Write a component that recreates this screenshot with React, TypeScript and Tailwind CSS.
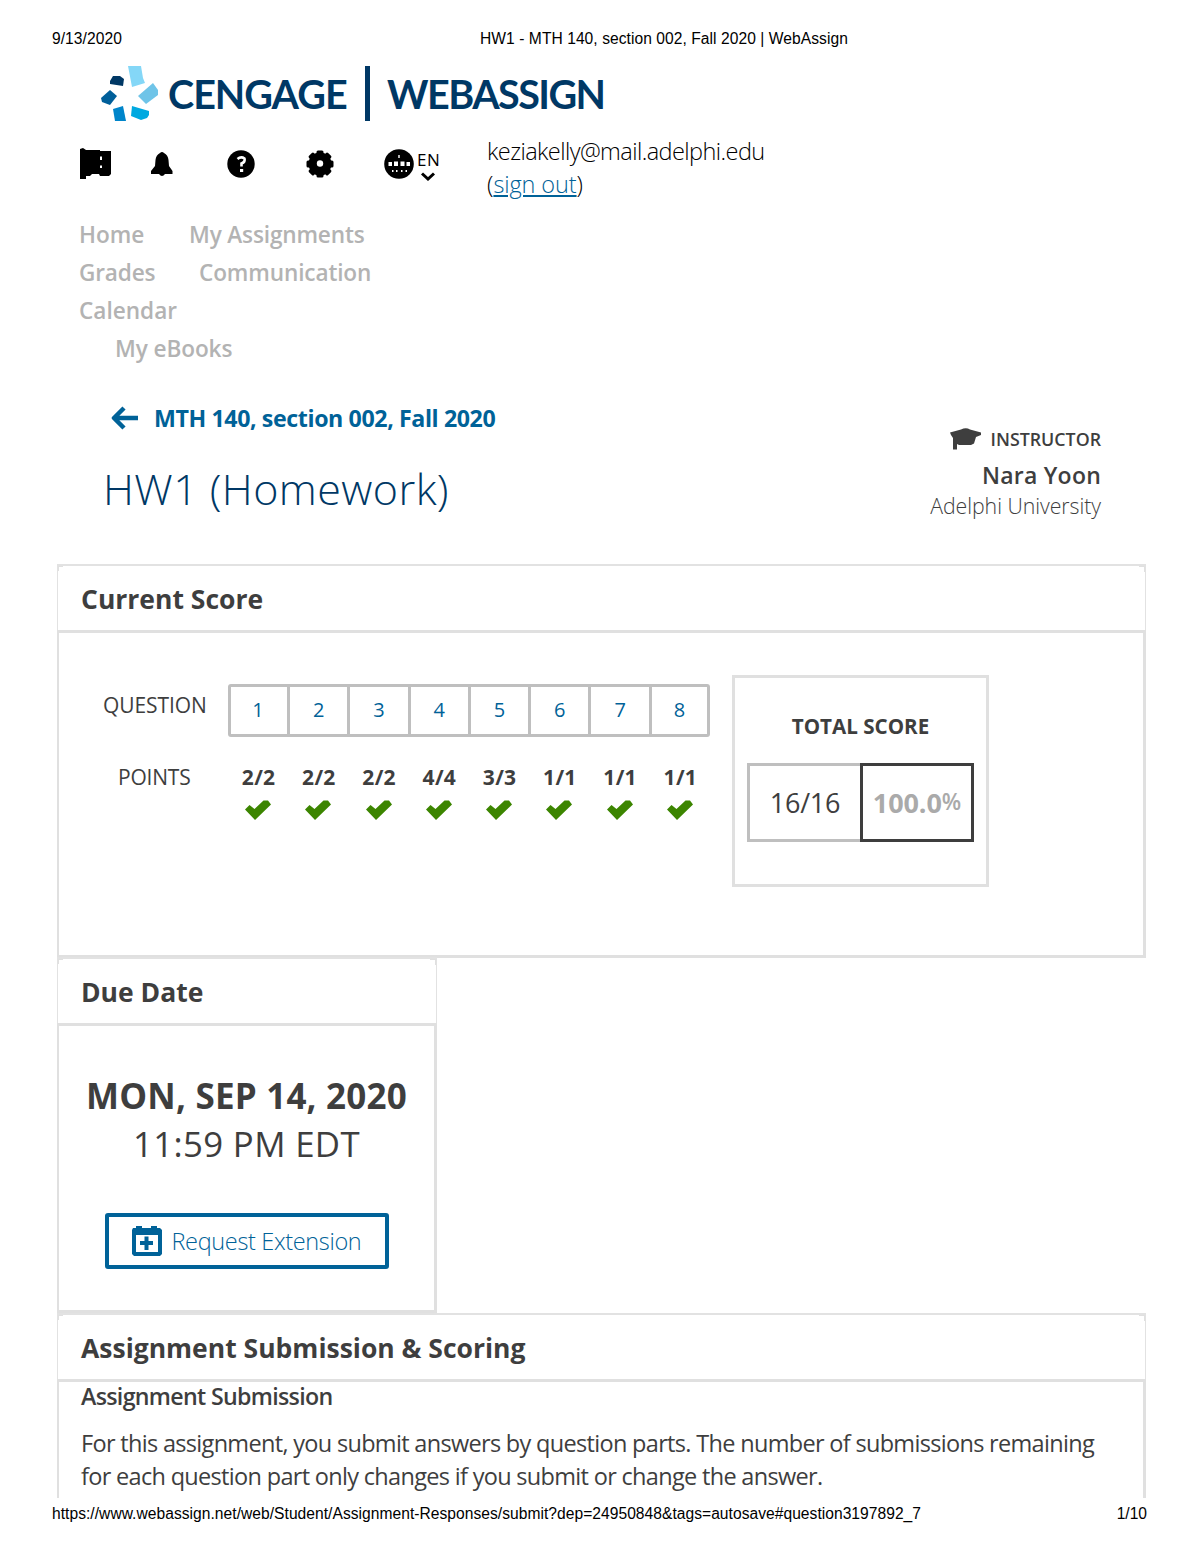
function T({ c = "", children }: { c?: string; children: string }) {
  return <span className={"whitespace-pre inline-block " + c}>{children}</span>;
}

function LogoMark() {
  return (
    <svg viewBox="0 0 58 56" className="w-[58px] h-[56px]">
      <path d="M27 0H40L42 12L44 17L31 21Z" fill="#84d7f7" />
      <path d="M37 30L52 17L57 24V29L45 38Z" fill="#6fc4e8" />
      <path d="M31 40L48 45V49L46 52L40 54L30 50Z" fill="#00a9e0" />
      <path d="M12 43L22 40L25 55H14Z" fill="#0085ca" />
      <path d="M0 32L9 24L16 30L9 39L1 36Z" fill="#005f9a" />
      <path d="M9 15L12 10H19L23 13L22 20L9 18Z" fill="#003865" />
    </svg>
  );
}

function FlagIcon() {
  return (
    <svg viewBox="0 0 32 32" className="w-8 h-8">
      <path d="M0 1L3 0L6 2H20V3H31V26L29 28L20 28L19 26H12L10 28H6V31H0Z" />
      <path d="M20 8.500h2v3.500h-2zM20 17.500h2v2.500h-2z" fill="#fff" />
    </svg>
  );
}

function BellIcon() {
  return (
    <svg viewBox="0 0 22 24" className="w-[22px] h-6">
      <path d="M9 1Q11-1 13 1Q17 3 17.500 8L18 14L21.500 19V22H14Q11 26 8 22H0V19L4 14L4.500 8Q5 3 9 1Z" />
    </svg>
  );
}

function HelpIcon() {
  return (
    <svg viewBox="0 0 28 28" className="w-7 h-7">
      <circle cx="14" cy="14" r="13.700" />
      <path d="M10.500 9Q14 6 17.500 8.500Q18.500 12 14.500 13.500V16.500" fill="none" stroke="#fff" strokeWidth="2.600" />
      <rect x="13" y="19" width="3.200" height="3" fill="#fff" />
    </svg>
  );
}

function GearIcon() {
  return (
    <svg viewBox="0 0 28 28" className="w-7 h-7">
      <circle cx="14" cy="14" r="11.500" />
      <rect x="10.500" y="0.500" width="7" height="27" rx="1.500" />
      <rect x="10.500" y="0.500" width="7" height="27" rx="1.500" transform="rotate(45 14 14)" />
      <rect x="10.500" y="0.500" width="7" height="27" rx="1.500" transform="rotate(90 14 14)" />
      <rect x="10.500" y="0.500" width="7" height="27" rx="1.500" transform="rotate(135 14 14)" />
      <circle cx="14" cy="13.500" r="3.200" fill="#fff" />
    </svg>
  );
}

function GlobeIcon() {
  return (
    <svg viewBox="0 0 30 30" className="w-[30px] h-[30px]">
      <circle cx="15" cy="15" r="14.800" />
      <g fill="#fff">
        <path d="M4.500 13h3.500v4h-3.500zM10 12.500h4v4.500h-4zM16.500 12.500h4v4.500h-4zM22.500 13h3.500v4h-3.500z" />
        <path d="M14.300 6h1.400v3h-1.400zM8 21h1.500v2h-1.500zM12 21h1.500v2h-1.500zM17 21h1.500v2h-1.500zM21.500 21h1.500v2h-1.500z" />
      </g>
    </svg>
  );
}

function Check() {
  return (
    <svg viewBox="0 0 26 20" className="w-[26px] h-5 block">
      <path d="M0 9.500L4.500 5L9.500 9L18.500 0.500H23L26 4.500L10 20Z" fill="#3c8500" />
    </svg>
  );
}

function CapIcon() {
  return (
    <svg viewBox="0 0 32 22" className="w-8 h-[22px]">
      <path
        d="M0 4.500L11 1.500Q16-1 20 1.500L31 4.500V7L26 9L24 15.500L21 17H9L7 16V21.500H3V10L1 7Z"
        fill="#3e3e3e"
      />
    </svg>
  );
}

function CardTitle({ children }: { children: string }) {
  return (
    <div className="relative h-[66px] border-t-2 border-x border-[#e2e2e2] pl-[23px] text-[26.500px] leading-[66px] font-bold">
      <span className="absolute left-0 top-0 w-[5px] h-[5px] border-t border-l border-[#e0e0e0]" />
      <span className="absolute right-0 top-0 w-[6px] h-[6px] border-t border-r border-[#e0e0e0]" />
      <T>{children}</T>
    </div>
  );
}

const scores = ["2/2", "2/2", "2/2", "4/4", "3/3", "1/1", "1/1", "1/1"];

export default function App() {
  return (
    <div className="w-[1200px] h-[1553px] overflow-hidden bg-white font-['Open_Sans',sans-serif] text-[#3e3e3e] flex flex-col">
      <div className="h-[56px] pt-[29px] pl-[52px] flex shrink-0 text-black text-[15.600px] leading-5 font-['Liberation_Sans',sans-serif] tracking-[0.055px]">
        <div className="w-[428px]"><T>9/13/2020</T></div>
        <T>HW1 - MTH 140, section 002, Fall 2020 | WebAssign</T>
      </div>

      <div className="flex h-[76px] pt-[10px] pl-[101px] shrink-0 text-[#003865] text-[39.500px] leading-[56px] font-['Lato',sans-serif] font-bold">
        <LogoMark />
        <div className="pl-[9px] w-[206px] tracking-[-1px]"><T>CENGAGE</T></div>
        <div className="w-[5px] h-[55px] bg-[#003865] mr-[17px]" />
        <T c="tracking-[-1.550px]">WEBASSIGN</T>
      </div>

      <div className="flex h-[84px] shrink-0 text-black">
        <div className="flex items-start pt-[16px] pl-[80px] w-[487px]">
          <div className="w-[71px]"><FlagIcon /></div>
          <div className="w-[76px] pt-1"><BellIcon /></div>
          <div className="w-[79px] pt-[2px]"><HelpIcon /></div>
          <div className="w-[78px] pt-[2px]"><GearIcon /></div>
          <div className="pt-[1px]"><GlobeIcon /></div>
          <div className="pl-[3px] text-[17px] leading-[22px] pt-[1px]">
            <T c="tracking-[0.500px]">EN</T>
            <svg viewBox="0 0 16 9" className="w-4 h-[9px] block ml-[3px] mt-px">
              <path d="M2 1.500L8 7L14 1.500" fill="none" stroke="#000" strokeWidth="3" />
            </svg>
          </div>
        </div>
        <div className="text-[23.500px] leading-[32.500px] pt-[3px] flex flex-col items-start">
          <T c="font-light tracking-[-0.570px]">keziakelly@mail.adelphi.edu</T>
          <span className="flex font-light">
            <T>(</T>
            <T c="text-[#006298] underline decoration-2 underline-offset-2 tracking-[-0.100px]">sign out</T>
            <T>)</T>
          </span>
        </div>
      </div>

      <nav className="pl-[79px] h-[176px] shrink-0 text-[22.600px] leading-[37.900px] font-semibold text-[#b3b3b3]">
        <div className="flex"><div className="w-[110px]"><T>Home</T></div><T c="tracking-[-0.160px]">My Assignments</T></div>
        <div className="flex"><div className="w-[120px]"><T c="tracking-[-0.150px]">Grades</T></div><T c="tracking-[-0.130px]">Communication</T></div>
        <div><T>Calendar</T></div>
        <div className="pl-[36px]"><T c="tracking-[-0.100px]">My eBooks</T></div>
      </nav>

      <div className="flex h-[172px] shrink-0 justify-between pl-[103px] pr-[99px]">
        <div className="pt-[6px]">
          <div className="flex items-center h-[40px] pl-[8px] text-[23.200px] leading-[40px] font-bold text-[#006298]">
            <svg viewBox="0 0 28 26" className="w-7 h-[26px] mr-[15px] -mt-px">
              <path d="M13 3L3 13L13 23M3 13H27" fill="none" stroke="#006298" strokeWidth="4.500" strokeLinejoin="round" />
            </svg>
            <T c="tracking-[-0.400px]">MTH 140, section 002, Fall 2020</T>
          </div>
          <div className="pt-[19px] text-[43px] leading-[64px] font-light text-[#003865]"><T c="tracking-[0.430px]">HW1 (Homework)</T></div>
        </div>
        <div className="flex flex-col items-end pt-[34px]">
          <div className="flex items-center text-[17.800px] leading-[26px] font-semibold">
            <span className="pr-[9px]"><CapIcon /></span>
            <T>INSTRUCTOR</T>
          </div>
          <div className="text-[23px] leading-[30px] pt-[8px] font-semibold"><T c="tracking-[0.230px]">Nara Yoon</T></div>
          <div className="text-[21.300px] leading-[30px] pt-px font-light"><T c="tracking-[-0.050px]">Adelphi University</T></div>
        </div>
      </div>

      <section className="ml-[57px] w-[1089px] h-[393px] shrink-0">
        <CardTitle>Current Score</CardTitle>
        <div className="h-[328px] border-y-[3px] border-l-2 border-r-[3px] border-[#e0e0e0] flex pl-[44px] pt-[42px]">
          <div className="w-[125px] text-[21px] leading-[44px] pt-[8px]">
            <T c="tracking-[-0.100px]">QUESTION</T>
            <div className="pl-[15px] pt-[28px]"><T c="tracking-[-0.200px]">POINTS</T></div>
          </div>
          <div className="w-[482px]">
            <div className="grid grid-cols-[56px_repeat(6,60.3px)_58.2px] h-[53px] mt-[9px] border-[3px] border-[#bfbfbf] rounded-[3px] text-[20px] leading-[46px] text-[#006298] text-center">
              {scores.map((_, i) => (
                <div key={i} className={i ? "border-l-[3px] border-[#bfbfbf]" : "pr-[2px]"}>{i + 1}</div>
              ))}
            </div>
            <div className="grid grid-cols-8 pt-[24px] text-[21px] leading-[32px] font-bold text-center">
              {scores.map((s, i) => (
                <div key={i} className="flex flex-col items-center">
                  <T c="tracking-[0.300px] pl-px">{s}</T>
                  <div className="pt-[7px]"><Check /></div>
                </div>
              ))}
            </div>
          </div>
          <div className="ml-[22px] w-[257px] h-[212px] border-[3px] border-[#e0e0e0] px-[12px]">
            <div className="pt-[32px] text-center text-[20.600px] leading-[32px] font-bold"><T>TOTAL SCORE</T></div>
            <div className="flex mt-[21px] h-[79px] text-[27px] leading-[74px]">
              <div className="w-[113px] border-[3px] border-r-0 border-[#bfbfbf] text-center"><T c="tracking-[-0.200px]">16/16</T></div>
              <div className="w-[114px] border-[3px] border-[#3e3e3e] text-[#aaa] font-bold flex justify-center">
                <T c="tracking-[-0.100px]">100.0</T><T c="text-[22.500px] leading-[72px] font-semibold">%</T>
              </div>
            </div>
          </div>
        </div>
      </section>

      <section className="ml-[57px] w-[380px] h-[356px] shrink-0">
        <CardTitle>Due Date</CardTitle>
        <div className="h-[290px] border-y-[3px] border-l-2 border-r-[3px] border-[#e0e0e0] text-center pt-[46px] flex flex-col items-center">
          <div className="text-[35px] leading-[48px] font-bold"><T c="tracking-[0.200px]">MON, SEP 14, 2020</T></div>
          <div className="text-[34.800px] leading-[47px]"><T c="tracking-[0.350px]">11:59 PM EDT</T></div>
          <div className="mt-[46px] w-[284px] h-[56px] border-4 border-[#006298] rounded-[3px] text-[#006298] flex items-center pl-[22px] text-[23.500px] leading-[48px]">
            <svg viewBox="0 0 32 32" className="w-8 h-8 mr-[9px]">
              <path fillRule="evenodd" d="M2 3H5V1H11V3H20V1H26V3H29L31 5V29L29 31H3L1 29V5ZM5 10V27H27V10Z" fill="#006298" />
              <path d="M15.500 11.500V25M9 18H22" stroke="#006298" strokeWidth="4" />
            </svg>
            <T c="font-light tracking-[-0.350px]">Request Extension</T>
          </div>
        </div>
      </section>

      <section className="ml-[57px] w-[1089px] h-[185px] shrink-0">
        <CardTitle>Assignment Submission & Scoring</CardTitle>
        <div className="h-[119px] border-t-[3px] border-l-2 border-r-[3px] border-[#e0e0e0] pl-[22px] text-[23.500px] leading-[32.500px]">
          <div className="font-semibold leading-[29px] text-[23.200px]"><T c="tracking-[-0.680px]">Assignment Submission</T></div>
          <div className="pt-[16px] flex flex-col items-start tracking-[-0.680px]">
            <T>For this assignment, you submit answers by question parts. The number of submissions remaining</T>
            <T>for each question part only changes if you submit or change the answer.</T>
          </div>
        </div>
      </section>

      <div className="flex justify-between pl-[52px] pr-[53px] pt-[6px] shrink-0 text-black text-[15.600px] leading-5 font-['Liberation_Sans',sans-serif]">
        <T c="tracking-[0.035px]">https://www.webassign.net/web/Student/Assignment-Responses/submit?dep=24950848&tags=autosave#question3197892_7</T>
        <T>1/10</T>
      </div>
    </div>
  );
}
